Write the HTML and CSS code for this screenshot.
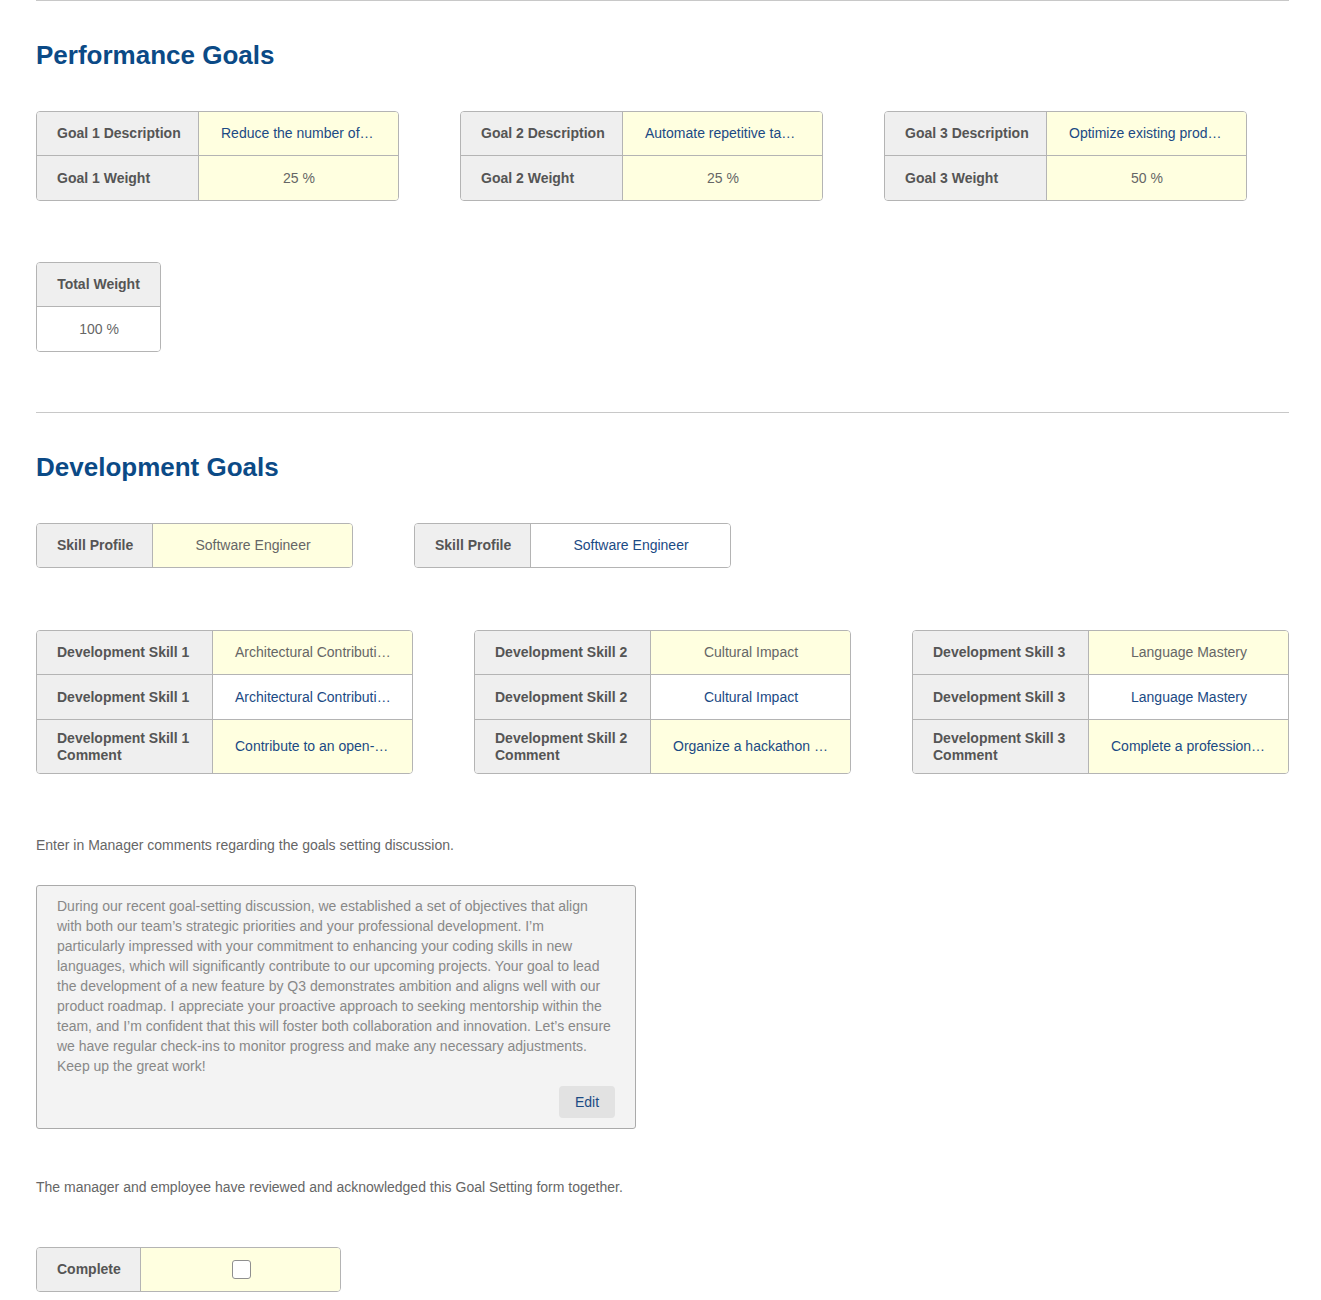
FILE: index.html
```html
<!DOCTYPE html>
<html lang="en">
<head>
<meta charset="utf-8">
<title>Goal Setting</title>
<link rel="stylesheet" href="styles.css">
</head>
<body>
<div class="page">
  <hr class="rule">
  <h2 class="section-title">Performance Goals</h2>

  <div class="card-row">
    <div class="card goal-card">
      <div class="lbl">Goal 1 Description</div>
      <div class="val yellow blue">Reduce the number of bugs reported</div>
      <div class="lbl">Goal 1 Weight</div>
      <div class="val yellow gray">25 %</div>
    </div>
    <div class="card goal-card">
      <div class="lbl">Goal 2 Description</div>
      <div class="val yellow blue">Automate repetitive tasks</div>
      <div class="lbl">Goal 2 Weight</div>
      <div class="val yellow gray">25 %</div>
    </div>
    <div class="card goal-card">
      <div class="lbl">Goal 3 Description</div>
      <div class="val yellow blue">Optimize existing product features</div>
      <div class="lbl">Goal 3 Weight</div>
      <div class="val yellow gray">50 %</div>
    </div>
  </div>

  <div class="card total-card">
    <div class="lbl center">Total Weight</div>
    <div class="val white gray">100 %</div>
  </div>

  <hr class="rule mid-rule">
  <h2 class="section-title">Development Goals</h2>

  <div class="card-row">
    <div class="card profile-card">
      <div class="lbl">Skill Profile</div>
      <div class="val yellow gray">Software Engineer</div>
    </div>
    <div class="card profile-card">
      <div class="lbl">Skill Profile</div>
      <div class="val white blue">Software Engineer</div>
    </div>
  </div>

  <div class="card-row skills-row">
    <div class="card skill-card">
      <div class="lbl">Development Skill 1</div>
      <div class="val yellow gray">Architectural Contribution</div>
      <div class="lbl">Development Skill 1</div>
      <div class="val white blue">Architectural Contribution</div>
      <div class="lbl tall">Development Skill 1<br>Comment</div>
      <div class="val yellow blue">Contribute to an open-source project</div>
    </div>
    <div class="card skill-card">
      <div class="lbl">Development Skill 2</div>
      <div class="val yellow gray">Cultural Impact</div>
      <div class="lbl">Development Skill 2</div>
      <div class="val white blue">Cultural Impact</div>
      <div class="lbl tall">Development Skill 2<br>Comment</div>
      <div class="val yellow blue">Organize a hackathon event</div>
    </div>
    <div class="card skill-card">
      <div class="lbl">Development Skill 3</div>
      <div class="val yellow gray">Language Mastery</div>
      <div class="lbl">Development Skill 3</div>
      <div class="val white blue">Language Mastery</div>
      <div class="lbl tall">Development Skill 3<br>Comment</div>
      <div class="val yellow blue">Complete a professional certification</div>
    </div>
  </div>

  <p class="note comments-note">Enter in Manager comments regarding the goals setting discussion.</p>

  <div class="comment-box">
    <p class="comment-text">During our recent goal-setting discussion, we established a set of objectives that align with both our team’s strategic priorities and your professional development. I’m particularly impressed with your commitment to enhancing your coding skills in new languages, which will significantly contribute to our upcoming projects. Your goal to lead the development of a new feature by Q3 demonstrates ambition and aligns well with our product roadmap. I appreciate your proactive approach to seeking mentorship within the team, and I’m confident that this will foster both collaboration and innovation. Let’s ensure we have regular check-ins to monitor progress and make any necessary adjustments. Keep up the great work!</p>
    <div class="comment-actions">
      <button class="edit-btn" type="button">Edit</button>
    </div>
  </div>

  <p class="note ack-note">The manager and employee have reviewed and acknowledged this Goal Setting form together.</p>

  <div class="card complete-card">
    <div class="lbl">Complete</div>
    <div class="val yellow"><span class="checkbox"></span></div>
  </div>
</div>
</body>
</html>
```

FILE: styles.css
```css
html, body {
  margin: 0;
  padding: 0;
  background: #ffffff;
}

body {
  font-family: "Liberation Sans", Arial, sans-serif;
  font-size: 14px;
  color: #555555;
}

.page {
  padding: 0 32px 20px 36px;
}

.rule {
  border: 0;
  border-top: 1px solid #c8c8c8;
  margin: 0;
  height: 0;
}

.mid-rule {
  margin-top: 60px;
}

.section-title {
  margin: 39px 0 41px 0;
  font-size: 26px;
  line-height: 30px;
  font-weight: bold;
  color: #0b4a86;
}

.card-row {
  display: flex;
  gap: 61px;
  align-items: flex-start;
}

.card {
  display: grid;
  border: 1px solid #b4b4b4;
  border-radius: 4px;
  overflow: hidden;
  box-sizing: border-box;
}

.lbl {
  background: #efefef;
  font-weight: bold;
  color: #555555;
  padding: 0 10px 0 20px;
  min-height: 44px;
  display: flex;
  align-items: center;
  line-height: 17px;
  border-right: 1px solid #b4b4b4;
  border-top: 1px solid #b4b4b4;
  box-sizing: content-box;
}

.val {
  min-height: 44px;
  line-height: 44px;
  padding: 0 21px 0 22px;
  text-align: center;
  white-space: nowrap;
  overflow: hidden;
  text-overflow: ellipsis;
  border-top: 1px solid #b4b4b4;
  box-sizing: content-box;
}

.card > .lbl:nth-child(1),
.card > .val:nth-child(2) {
  border-top: 0;
  min-height: 43px;
  line-height: 43px;
}

.card > .lbl:nth-child(1) {
  line-height: 17px;
}

.yellow { background: #ffffe0; }
.white { background: #ffffff; }
.gray { color: #666666; }
.blue { color: #1b4a84; }

.goal-card {
  grid-template-columns: 162px 199px;
  width: 363px;
}

.total-card {
  grid-template-columns: 123px;
  width: 125px;
  margin-top: 61px;
}

.total-card > .lbl {
  border-right: 0;
  justify-content: center;
  padding: 0;
}

.total-card > .val:nth-child(2) {
  border-top: 1px solid #b4b4b4;
  min-height: 44px;
  line-height: 44px;
}

.profile-card {
  grid-template-columns: 116px 199px;
  width: 317px;
}

.skills-row {
  margin-top: 62px;
}

.skill-card {
  grid-template-columns: 176px 199px;
  width: 377px;
}

.skill-card .tall {
  min-height: 53px;
}

.skill-card .tall + .val {
  line-height: 53px;
}

.note {
  margin: 0;
  line-height: 20px;
  font-size: 14px;
  color: #666666;
}

.comments-note {
  margin-top: 61px;
}

.comment-box {
  width: 600px;
  box-sizing: border-box;
  margin-top: 30px;
  background: #f3f3f3;
  border: 1px solid #aaaaaa;
  border-radius: 3px;
  padding: 10px 20px 10px 20px;
}

.comment-text {
  margin: 0;
  line-height: 20px;
  color: #888888;
}

.comment-actions {
  display: flex;
  justify-content: flex-end;
  margin-top: 10px;
}

.edit-btn {
  font-family: "Liberation Sans", Arial, sans-serif;
  font-size: 14px;
  line-height: 30px;
  color: #1b4a84;
  background: #e2e2e2;
  border: 0;
  border-radius: 4px;
  width: 56px;
  height: 32px;
  padding: 0;
}

.ack-note {
  margin-top: 48px;
}

.complete-card {
  grid-template-columns: 104px 199px;
  width: 305px;
  margin-top: 50px;
}

.complete-card > .val {
  display: flex;
  align-items: center;
  justify-content: center;
  line-height: normal;
}

.checkbox {
  display: block;
  width: 17px;
  height: 17px;
  background: #ffffff;
  border: 1px solid #8f8f8f;
  border-radius: 3px;
}
```
